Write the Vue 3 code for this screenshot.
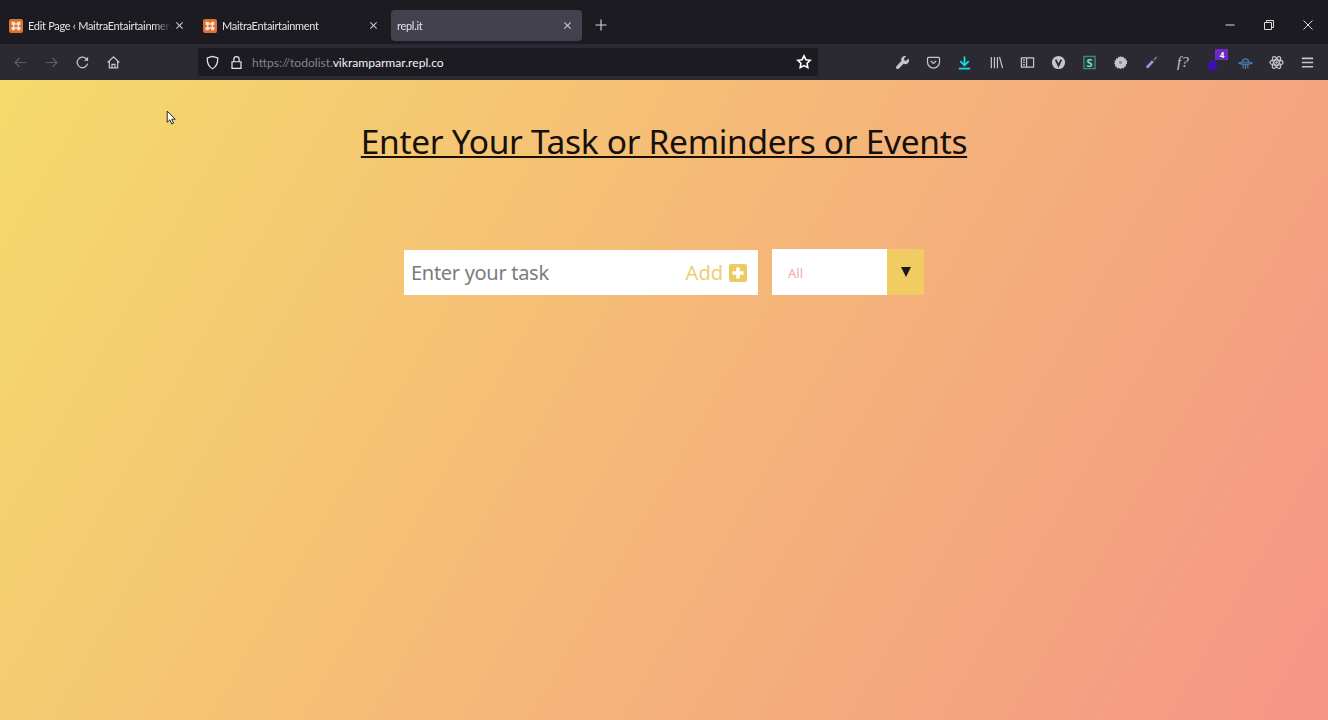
<script setup>
const tabs = [
  { title: 'Edit Page ‹ MaitraEntairtainment', icon: true },
  { title: 'MaitraEntairtainment', icon: true },
  { title: 'repl.it', icon: false, active: true }
]
</script>

<template>
  <div class="browser">
    <div class="tabbar">
      <div v-for="t in tabs" :key="t.title" class="tab" :class="{ active: t.active }">
        <svg v-if="t.icon" class="favicon" viewBox="0 0 14 14">
          <rect width="14" height="14" rx="2" fill="#dd7034" />
          <path d="M2.600 2.800h3.200v1.500h2.400V2.800h3.200v3.200H10v2h1.400v3.200H8.200V9.700H5.800v1.500H2.600V8H4V6H2.600z" fill="#fbe6d6" />
          <path d="M5.400 5.600h3.200v2.800H5.400z" fill="#dd7034" />
        </svg>
        <span class="tab-title">{{ t.title }}</span>
        <svg class="tab-close" viewBox="0 0 10 10"><path d="M1.500 1.500l7 7M8.500 1.500l-7 7" /></svg>
      </div>
      <svg class="new-tab" viewBox="0 0 12 12"><path d="M6 .5v11M.5 6h11" /></svg>
      <div class="win-controls">
        <svg viewBox="0 0 12 12"><path d="M1.500 6h9" /></svg>
        <svg viewBox="0 0 12 12"><path d="M1.500 3.500h7v7h-7zM3.500 3.500v-2h7v7h-2" /></svg>
        <svg viewBox="0 0 12 12"><path d="M1.500 1.500l9 9M10.500 1.500l-9 9" /></svg>
      </div>
    </div>

    <div class="toolbar">
      <div class="tool dim"><svg viewBox="0 0 16 16"><path d="M14 8H2.500M7 3.200L2.200 8 7 12.800" /></svg></div>
      <div class="tool dim"><svg viewBox="0 0 16 16"><path d="M2 8h11.500M9 3.200L13.800 8 9 12.800" /></svg></div>
      <div class="tool"><svg viewBox="0 0 16 16"><path d="M13.400 9.200A5.600 5.600 0 1 1 11.800 3.800L13.600 5.600" /><path d="M14 1.800v4.400H9.600z" class="solid" /></svg></div>
      <div class="tool"><svg viewBox="0 0 16 16"><path d="M1.800 8L8 2l6.200 6M3.600 6.600v7.200h8.800V6.600M6.400 13.800V10h3.200v3.800" /></svg></div>

      <div class="urlbar">
        <svg class="url-icon shield" viewBox="0 0 16 16"><path d="M8 1.400l5.600 1.800c.2 5.400-1.400 9.400-5.600 11.400C3.800 12.600 2.200 8.600 2.400 3.200z" /></svg>
        <svg class="url-icon lock" viewBox="0 0 16 16"><path d="M3.200 7.200h9.600v7H3.200zM5.200 7.200V4.600a2.800 2.800 0 0 1 5.600 0v2.600" /></svg>
        <span class="url"><span class="url-dim">https://todolist.</span>vikramparmar.repl.co</span>
        <svg class="star" viewBox="0 0 16 16"><path d="M8 1.800l1.900 3.900 4.300.6-3.100 3 .7 4.300L8 11.600l-3.800 2 .7-4.300-3.100-3 4.300-.6z" /></svg>
      </div>

      <div class="tools-right">
        <div class="tool"><svg viewBox="0 0 16 16"><path class="solid" d="M14.500 3.800l-2.500 2.400-2-.4-.4-2 2.400-2.400a4 4 0 0 0-5.300 4.900L1.600 11.900a1.700 1.700 0 0 0 2.500 2.500l5.100-5.100a4 4 0 0 0 5.300-5.500z" /></svg></div>
        <div class="tool"><svg viewBox="0 0 16 16"><path d="M2.800 2.600h10.400a1.200 1.200 0 0 1 1.200 1.200v3.700a6.400 6.400 0 0 1-12.800 0V3.800a1.200 1.200 0 0 1 1.200-1.200z" /><path d="M5.200 6.400L8 9l2.800-2.600" /></svg></div>
        <div class="tool cyan"><svg viewBox="0 0 16 16"><path d="M8 1.500v9M3.500 6.500L8 11l4.500-4.500" stroke-width="2" /><path d="M2 14.500h12" stroke-width="2" /></svg></div>
        <div class="tool"><svg viewBox="0 0 16 16"><path d="M2.500 2v12M5.800 2v12M9 2v12M11.200 2l3.300 12" /></svg></div>
        <div class="tool"><svg viewBox="0 0 16 16"><path d="M1.500 3h13v10h-13zM7 3v10M3 5.500h2.300M3 8h2.300M3 10.500h2.300" /></svg></div>
        <div class="tool">
          <svg viewBox="0 0 16 16"><circle cx="8" cy="8" r="7" class="solid" /><path d="M5 5l3 6.200L11 5" class="cut" /></svg>
        </div>
        <div class="tool green">
          <svg viewBox="0 0 16 16"><path d="M2 1.500h12v13H2z" fill="#23423f" stroke="#3f8a78" stroke-width="1.400" /></svg>
          <span class="s-letter">S</span>
        </div>
        <div class="tool"><svg viewBox="0 0 16 16"><path class="solid" d="M8 1l1.300 1.500 1.800-.8.600 1.900 2-.1-.1 2 1.900.6-.8 1.800L15 9.200l-1.500 1 .6 1.900-2 .4-.4 1.900-1.900-.6L8 15l-1.800-1.200-1.900.6-.4-1.900-2-.4.6-1.900-1.500-1 1.200-1.300-.8-1.800 1.900-.6-.1-2 2 .1.600-1.900 1.800.8z" /><circle cx="8" cy="8" r="2.400" fill="#8e8d92" /></svg></div>
        <div class="tool"><svg viewBox="0 0 16 16"><path d="M3 13.500L9.500 6.500" stroke="#9a97d8" stroke-width="3" /><path d="M10.500 5.500l3-3.500" stroke="#8d8c94" stroke-width="1.400" /></svg></div>
        <div class="tool"><span class="fx">f?</span></div>
        <div class="tool">
          <svg class="hex" viewBox="0 0 16 16"><path d="M6 1.500l6 1.500 2.500 5-3 6-6.500.5L1.500 8z" fill="#3f0fb0" stroke="none" /></svg>
          <span class="badge">4</span>
        </div>
        <div class="tool blue"><svg viewBox="0 0 16 16"><path d="M1 8.500c2-1.400 12-1.400 14 0-2 1.600-12 1.600-14 0zM4.800 7.400a3.200 3.200 0 0 1 6.400 0M5.500 10.500v3.500M8 10.500V15M10.500 10.500v3.500" /></svg></div>
        <div class="tool"><svg viewBox="0 0 16 16"><ellipse cx="8" cy="8" rx="7" ry="2.800" /><ellipse cx="8" cy="8" rx="7" ry="2.800" transform="rotate(60 8 8)" /><ellipse cx="8" cy="8" rx="7" ry="2.800" transform="rotate(120 8 8)" /><circle cx="8" cy="8" r="1.300" class="solid" /></svg></div>
        <div class="tool"><svg viewBox="0 0 16 16"><path d="M2 3.500h12M2 8h12M2 12.500h12" stroke-width="1.800" /></svg></div>
      </div>
    </div>

    <main class="page">
      <h1>Enter Your Task or Reminders or Events</h1>
      <form class="todo-form" @submit.prevent>
        <div class="task-box">
          <input class="task-input" type="text" placeholder="Enter your task" />
          <button class="add-btn" type="button">
            Add
            <svg viewBox="0 0 18 18"><rect width="18" height="18" rx="2" fill="#ebcc63" /><path d="M9 3.500v11M3.500 9h11" stroke="#fff" stroke-width="3.600" /></svg>
          </button>
        </div>
        <div class="filter">
          <select class="filter-select">
            <option>All</option>
            <option>Completed</option>
            <option>Uncompleted</option>
          </select>
          <div class="filter-arrow"><i></i></div>
        </div>
      </form>
      <svg class="cursor" viewBox="0 0 10 14"><path d="M1 1v10.500l2.500-2.300 1.700 3.800 1.700-.8-1.700-3.600h3.300z" fill="#fff" stroke="#222" stroke-width=".9" /></svg>
    </main>
  </div>
</template>

<style scoped>
.browser {
  width: 1328px;
  height: 720px;
  overflow: hidden;
  display: flex;
  flex-direction: column;
  font-family: "Noto Sans", "Open Sans", sans-serif;
}

.tabbar {
  height: 44px;
  flex: none;
  background: #1c1b22;
  display: flex;
  align-items: flex-start;
  gap: 3px;
  padding: 10px 0 0 3px;
  box-sizing: border-box;
}

.tab {
  width: 191px;
  height: 31px;
  padding: 0 10px 0 6px;
  box-sizing: border-box;
  border-radius: 4px;
  display: flex;
  align-items: center;
  color: #e4e4e6;
  font-family: "Lato", "Noto Sans", sans-serif;
  font-size: 11px;
  letter-spacing: -0.300px;
}

.tab.active {
  background: #42414d;
}

.favicon {
  width: 14px;
  height: 14px;
  flex: none;
  margin-right: 5px;
}

.tab-title {
  flex: 1;
  min-width: 0;
  white-space: nowrap;
  overflow: hidden;
  -webkit-mask-image: linear-gradient(to right, #000 88%, transparent);
  mask-image: linear-gradient(to right, #000 88%, transparent);
}

.tab-close {
  width: 9px;
  height: 9px;
  flex: none;
  margin-left: 4px;
  fill: none;
  stroke: #c8c8cc;
  stroke-width: 1.200;
}

.new-tab {
  width: 12px;
  height: 12px;
  margin: 9px 0 0 10px;
  fill: none;
  stroke: #d8d8da;
  stroke-width: 1.100;
}

.win-controls {
  margin-left: auto;
  display: flex;
  gap: 27px;
  padding: 9px 14px 0 0;
}

.win-controls svg {
  width: 12px;
  height: 12px;
  fill: none;
  stroke: #dcdcde;
  stroke-width: 1;
}

.toolbar {
  height: 36px;
  flex: none;
  background: #2b2a33;
  display: flex;
  align-items: center;
  padding: 0 5px;
  box-sizing: border-box;
}

.tool {
  position: relative;
  width: 31px;
  height: 28px;
  flex: none;
  display: flex;
  align-items: center;
  justify-content: center;
  color: #c6c6ca;
}

.tools-right .tool {
  width: 31.150px;
}

.tool svg {
  width: 15px;
  height: 15px;
  fill: none;
  stroke: currentColor;
  stroke-width: 1.300;
}

.tool .solid {
  fill: currentColor;
  stroke: none;
}

.tool .cut {
  stroke: #2b2a33;
  stroke-width: 2;
}

.tool.dim {
  color: #5e5d66;
}

.tool.cyan {
  color: #18d5e0;
}

.tool.green {
  color: #9fd8c4;
}

.tool.blue {
  color: #4a7fb5;
}

.s-letter {
  position: absolute;
  left: 0;
  right: 0;
  text-align: center;
  font-size: 11px;
  font-weight: 700;
  color: #8fd4be;
}

.fx {
  font-family: "Liberation Serif", serif;
  font-style: italic;
  font-size: 15px;
  color: #c9c9cd;
}

.tool .hex {
  width: 13px;
  height: 13px;
  margin: 6px 3px 0 0;
}

.badge {
  position: absolute;
  top: 1px;
  left: 17px;
  width: 13px;
  height: 11px;
  background: #6a2bc4;
  color: #fff;
  font-size: 8px;
  font-weight: 700;
  line-height: 11px;
  text-align: center;
}

.urlbar {
  width: 620px;
  height: 28px;
  margin-left: 69px;
  flex: none;
  background: #1c1b22;
  border-radius: 3px;
  display: flex;
  align-items: center;
  padding: 0 6px 0 7px;
  box-sizing: border-box;
  position: relative;
}

.url-icon {
  width: 15px;
  height: 15px;
  flex: none;
  fill: none;
  stroke: #e6e6e8;
  stroke-width: 1.300;
}

.lock {
  margin-left: 9px;
}

.url {
  margin-left: 8px;
  font-family: "Lato", "Noto Sans", sans-serif;
  font-size: 12.100px;
  color: #f4f4f5;
  white-space: nowrap;
}

.url-dim {
  color: #85848c;
}

.star {
  width: 16px;
  height: 16px;
  margin-left: auto;
  fill: none;
  stroke: #fff;
  stroke-width: 1.600;
}

.tools-right {
  margin-left: auto;
  display: flex;
  align-items: center;
}

.page {
  flex: 1;
  position: relative;
  background: linear-gradient(120deg, #f5da6b 0%, #f59586 100%);
  display: flex;
  flex-direction: column;
  align-items: center;
}

h1 {
  margin: 37px 0 0;
  font-size: 33.500px;
  letter-spacing: -0.320px;
  line-height: 48px;
  font-weight: 400;
  color: #17100a;
  text-decoration: underline;
  text-decoration-thickness: 2px;
  text-underline-offset: 2px;
}

.todo-form {
  display: flex;
  align-items: center;
  gap: 14px;
  margin-top: 84px;
}

.task-box {
  width: 354px;
  height: 45px;
  background: #fff;
  display: flex;
  align-items: center;
  padding: 1px 11px 0 7px;
  box-sizing: border-box;
}

.task-input {
  flex: 1;
  min-width: 0;
  border: 0;
  outline: 0;
  padding: 0;
  background: none;
  font: inherit;
  font-size: 20px;
  letter-spacing: -0.300px;
  color: #333;
}

.task-input::placeholder {
  color: #7b7b7b;
  opacity: 1;
}

.add-btn {
  border: 0;
  padding: 0;
  background: none;
  display: flex;
  align-items: center;
  gap: 6px;
  font: inherit;
  font-size: 20px;
  color: #eccf72;
}

.add-btn svg {
  width: 18px;
  height: 18px;
}

.filter {
  display: flex;
  height: 46px;
}

.filter-select {
  width: 115px;
  border: 0;
  outline: 0;
  border-radius: 0;
  padding: 2px 16px 0;
  background: #fff;
  font: inherit;
  font-size: 13px;
  color: #eeaaa0;
  appearance: none;
  -webkit-appearance: none;
}

.filter-arrow {
  width: 37px;
  background: #f0cc63;
  display: flex;
  align-items: center;
  justify-content: center;
}

.filter-arrow i {
  width: 0;
  height: 0;
  border-left: 5.500px solid transparent;
  border-right: 5.500px solid transparent;
  border-top: 10px solid #1c1a14;
}

.cursor {
  position: absolute;
  left: 165.500px;
  top: 30px;
  width: 11px;
  height: 15px;
}
</style>
